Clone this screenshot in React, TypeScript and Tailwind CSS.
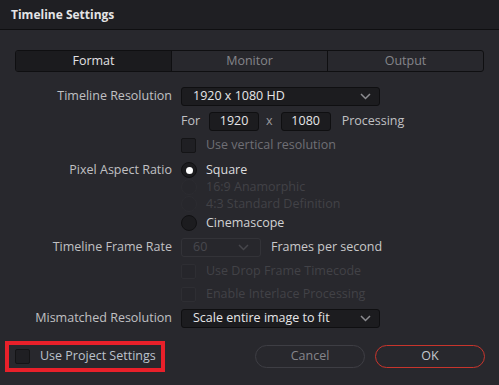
import React from "react";

const Chevron = ({ color = "#8c8c90" }: { color?: string }) => (
  <svg width="11" height="7" viewBox="0 0 11 7" fill="none">
    <path d="M1 1 L5.5 5.5 L10 1" stroke={color} strokeWidth="1.5" />
  </svg>
);

const Check = ({ dim = false }: { dim?: boolean }) => (
  <div
    className={`w-[15px] h-[15px] rounded-[2px] border ${
      dim ? "border-[#2e2e33] bg-[#26262b]" : "border-[#141416] bg-[#1f1f23]"
    }`}
  />
);

const Radio = ({ on = false, dim = false }: { on?: boolean; dim?: boolean }) => (
  <div
    className={`w-[16px] h-[16px] rounded-full border flex items-center justify-center ${
      dim ? "border-[#2c2c31] bg-[#27272c]" : "border-[#111113] bg-[#1c1c1f]"
    }`}
  >
    {on && <div className="w-[7px] h-[7px] rounded-full bg-white" />}
  </div>
);

const Label = ({ children }: { children?: React.ReactNode }) => (
  <div className="w-[172px] shrink-0 text-right text-[#c0c0c3] pr-0">{children}</div>
);

export default function App() {
  return (
    <div
      className="w-[499px] h-[385px] bg-[#28282d] text-[12.5px] leading-none overflow-hidden"
      style={{ fontFamily: '"Open Sans", "Noto Sans", sans-serif' }}
    >
      <div className="h-[30px] bg-[#1f1f23] border-b border-[#0f0f11] flex items-center pl-[11px]">
        <span className="text-[12px] font-bold text-[#e4e4e6]">Timeline Settings</span>
      </div>

      <div className="mx-[15px] mt-[20px] h-[22px] flex border border-[#0f0f11] rounded-[3px] overflow-hidden">
        <div className="w-[156px] bg-[#1b1b1e] flex items-center justify-center text-[#e2e2e4] border-r border-[#0f0f11]">
          Format
        </div>
        <div className="w-[156px] flex items-center justify-center text-[#85858a] border-r border-[#0f0f11]">
          Monitor
        </div>
        <div className="flex-1 flex items-center justify-center text-[#85858a]">Output</div>
      </div>

      <div className="flex flex-col">
        <div className="flex items-center mt-[15px] h-[19px]">
          <Label>Timeline Resolution</Label>
          <div className="ml-[9px] w-[199px] h-[19px] bg-[#1c1c1f] border border-[#0f0f11] rounded-[3px] flex items-center justify-between pl-[11px] pr-[8px] text-[#e6e6e8]">
            <span>1920 x 1080 HD</span>
            <Chevron />
          </div>
        </div>

        <div className="flex items-center mt-[6px] h-[19px]">
          <div className="w-[181px] shrink-0" />
          <span className="text-[#c0c0c3]">For</span>
          <div className="ml-[9px] w-[50px] h-[19px] bg-[#1c1c1f] border border-[#0f0f11] rounded-[3px] flex items-center justify-center text-[#e6e6e8]">
            1920
          </div>
          <span className="ml-[7px] text-[#9a9a9e]">x</span>
          <div className="ml-[8px] w-[50px] h-[19px] bg-[#1c1c1f] border border-[#0f0f11] rounded-[3px] flex items-center justify-center text-[#e6e6e8]">
            1080
          </div>
          <span className="ml-[11px] text-[#c0c0c3]">Processing</span>
        </div>

        <div className="flex items-center mt-[7px] h-[15px]">
          <div className="w-[181px] shrink-0" />
          <Check />
          <span className="ml-[10px] text-[#6f6f75]">Use vertical resolution</span>
        </div>

        <div className="flex items-center mt-[9px] h-[16px]">
          <Label>Pixel Aspect Ratio</Label>
          <div className="ml-[9px] flex items-center">
            <Radio on />
            <span className="ml-[9px] text-[#dcdcde]">Square</span>
          </div>
        </div>

        <div className="flex items-center mt-[1px] h-[16px]">
          <div className="w-[181px] shrink-0" />
          <Radio dim />
          <span className="ml-[9px] text-[#424247]">16:9 Anamorphic</span>
        </div>

        <div className="flex items-center mt-[1px] h-[16px]">
          <div className="w-[181px] shrink-0" />
          <Radio dim />
          <span className="ml-[9px] text-[#424247]">4:3 Standard Definition</span>
        </div>

        <div className="flex items-center mt-[3px] h-[16px]">
          <div className="w-[181px] shrink-0" />
          <Radio />
          <span className="ml-[9px] text-[#d2d2d4]">Cinemascope</span>
        </div>

        <div className="flex items-center mt-[7px] h-[19px]">
          <Label>Timeline Frame Rate</Label>
          <div className="ml-[9px] w-[80px] h-[19px] bg-[#27272c] border border-[#333338] rounded-[3px] flex items-center justify-between pl-[11px] pr-[11px] text-[#48484e]">
            <span>60</span>
            <Chevron color="#46464b" />
          </div>
          <span className="ml-[10px] text-[#c8c8ca]">Frames per second</span>
        </div>

        <div className="flex items-center mt-[7px] h-[15px]">
          <div className="w-[181px] shrink-0" />
          <Check dim />
          <span className="ml-[10px] text-[#424247]">Use Drop Frame Timecode</span>
        </div>

        <div className="flex items-center mt-[8px] h-[15px]">
          <div className="w-[181px] shrink-0" />
          <Check dim />
          <span className="ml-[10px] text-[#424247]">Enable Interlace Processing</span>
        </div>

        <div className="flex items-center mt-[7px] h-[19px]">
          <Label>Mismatched Resolution</Label>
          <div className="ml-[9px] w-[199px] h-[19px] bg-[#1c1c1f] border border-[#0f0f11] rounded-[3px] flex items-center justify-between pl-[11px] pr-[8px] text-[#e6e6e8]">
            <span>Scale entire image to fit</span>
            <Chevron />
          </div>
        </div>

        <div className="flex items-center mt-[13px]">
          <div className="ml-[5px] w-[160px] h-[31px] border-[4px] border-[#e8202a] flex items-center pl-[6px]">
            <Check />
            <span className="ml-[10px] text-[#bcc2cc]">Use Project Settings</span>
          </div>
          <div className="ml-[90px] w-[110px] h-[23px] rounded-full border border-[#3e3e44] flex items-center justify-center text-[#85858b]">
            Cancel
          </div>
          <div className="ml-[10px] w-[110px] h-[23px] rounded-full border border-[#c8352c] flex items-center justify-center text-[#c4c8ce]">
            OK
          </div>
        </div>
      </div>
    </div>
  );
}
